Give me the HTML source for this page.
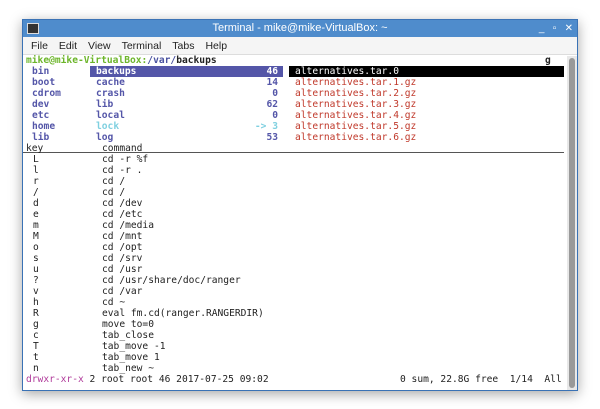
<!DOCTYPE html>
<html><head><meta charset="utf-8"><style>
*{margin:0;padding:0;box-sizing:border-box}
body{width:600px;height:409px;background:#fff;position:relative;overflow:hidden;font-family:"Liberation Sans",sans-serif}
.win{position:absolute;left:22px;top:19px;width:556px;height:372px;background:#fff;border:1px solid #3a72b5;box-shadow:0 3px 12px rgba(0,0,0,.35)}
.title{position:absolute;left:0;top:0;right:0;height:17px;background:#4f8ccc;color:#fff;font-size:11px;text-align:center;line-height:17px}
.menu{position:absolute;left:0;top:17px;right:0;height:18px;background:#f5f5f5;border-bottom:1px solid #ddd;font-size:10.5px;line-height:18px}
.menu span{margin-left:8px;margin-right:3px;color:#222}
.t{position:absolute;font-family:"DejaVu Sans Mono",monospace;font-size:9.6px;line-height:11px;white-space:pre;color:#222}
.b{font-weight:bold}
.sb{position:absolute;left:544px;top:36px;width:10px;height:334px;background:#e8e8e8}
.sb div{position:absolute;left:2px;top:2px;width:6px;height:330px;background:#999;border-radius:3px}
</style></head><body>
<div class="win">
<div class="title">Terminal - mike@mike-VirtualBox: ~</div>
<div style="position:absolute;left:4px;top:3px;width:12px;height:11px;background:#333;border:1px solid #ddd"></div>
<div style="position:absolute;right:4px;top:2px;width:50px;height:13px;color:#fff;font-size:10px;line-height:13px;text-align:right">_&nbsp;&nbsp;&nbsp;▫&nbsp;&nbsp;&nbsp;✕</div>
<div class="menu"><span>File</span><span>Edit</span><span>View</span><span>Terminal</span><span>Tabs</span><span>Help</span></div>
<div class="sb"><div></div></div>
</div>
<div class="t b" style="left:26px;top:55px"><span style="color:#6cb52a">mike@mike-VirtualBox:</span><span style="color:#4a52a0">/var/</span><span>backups</span></div>
<div class="t b" style="left:545px;top:55px">g</div>
<div style="position:absolute;left:90px;top:66px;width:193px;height:11px;background:#5456a8"></div>
<div style="position:absolute;left:289px;top:66px;width:275px;height:11px;background:#000"></div>
<div class="t b" style="left:32px;top:66px;color:#5456a8">bin
boot
cdrom
dev
etc
home
lib</div>
<div class="t b" style="left:96px;top:66px;color:#5456a8"><span style="color:#fff">backups</span>
cache
crash
lib
local
<span style="color:#7fd0e0">lock</span>
log</div>
<div class="t b" style="left:220px;top:66px;width:58px;text-align:right;color:#5456a8"><span style="color:#fff">46</span>
14
0
62
0
<span style="color:#7fd0e0">-&gt; 3</span>
53</div>
<div class="t" style="left:295px;top:66px;color:#c0392b"><span style="color:#fff">alternatives.tar.0</span>
alternatives.tar.1.gz
alternatives.tar.2.gz
alternatives.tar.3.gz
alternatives.tar.4.gz
alternatives.tar.5.gz
alternatives.tar.6.gz</div>
<div style="position:absolute;left:23px;top:152px;width:541px;height:1px;background:#555"></div>
<div class="t" style="left:26px;top:143px">key</div>
<div class="t" style="left:102px;top:143px">command</div>
<div class="t" style="left:33px;top:154px">L
l
r
/
d
e
m
M
o
s
u
?
v
h
R
g
c
T
t
n</div>
<div class="t" style="left:102px;top:154px">cd -r %f
cd -r .
cd /
cd /
cd /dev
cd /etc
cd /media
cd /mnt
cd /opt
cd /srv
cd /usr
cd /usr/share/doc/ranger
cd /var
cd ~
eval fm.cd(ranger.RANGERDIR)
move to=0
tab_close
tab_move -1
tab_move 1
tab_new ~</div>
<div class="t" style="left:26px;top:374px"><span style="color:#b03a9a">drwxr-xr-x</span> 2 root root 46 2017-07-25 09:02</div>
<div class="t" style="left:400px;top:374px">0 sum, 22.8G free  1/14  All</div>
</body></html>
